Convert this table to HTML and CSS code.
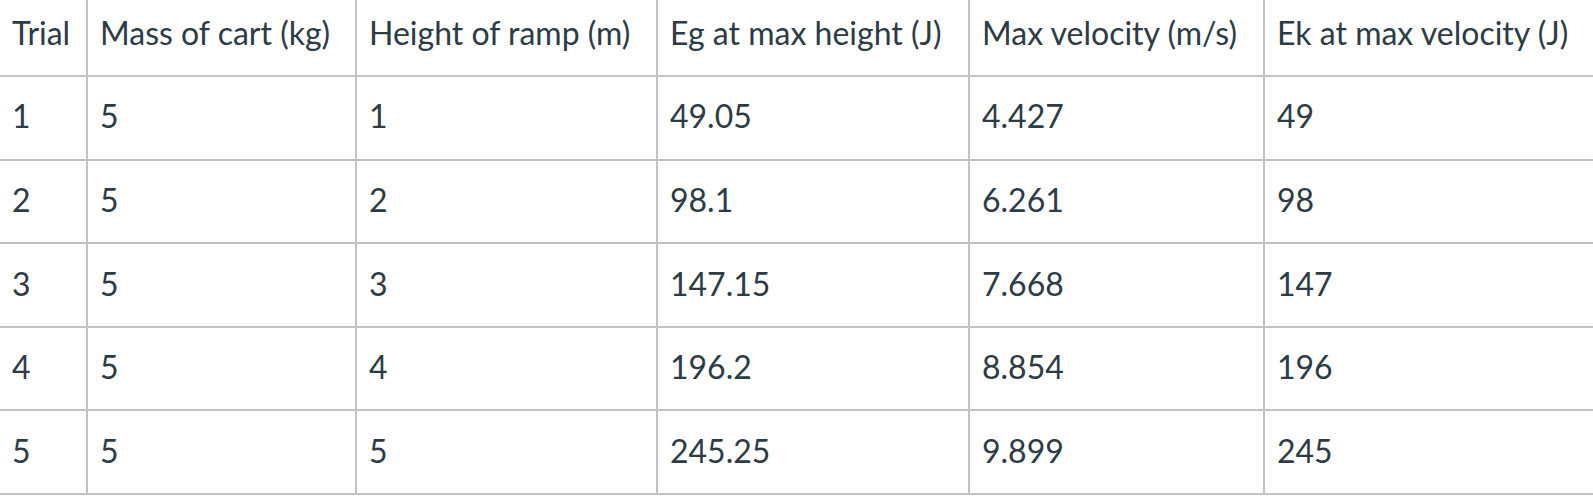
FILE: index.html
```html
<!DOCTYPE html>
<html lang="en">
<head>
<meta charset="utf-8">
<title>Cart on ramp</title>
<link rel="stylesheet" href="styles.css">
</head>
<body>
<table class="data">
  <colgroup>
    <col class="c1"><col class="c2"><col class="c3"><col class="c4"><col class="c5"><col class="c6">
  </colgroup>
  <thead>
    <tr>
      <th>Trial</th>
      <th>Mass of cart (kg)</th>
      <th>Height of ramp (m)</th>
      <th>Eg at max height (J)</th>
      <th>Max velocity (m/s)</th>
      <th>Ek at max velocity (J)</th>
    </tr>
  </thead>
  <tbody>
    <tr><td>1</td><td>5</td><td>1</td><td>49.05</td><td>4.427</td><td>49</td></tr>
    <tr><td>2</td><td>5</td><td>2</td><td>98.1</td><td>6.261</td><td>98</td></tr>
    <tr><td>3</td><td>5</td><td>3</td><td>147.15</td><td>7.668</td><td>147</td></tr>
    <tr><td>4</td><td>5</td><td>4</td><td>196.2</td><td>8.854</td><td>196</td></tr>
    <tr><td>5</td><td>5</td><td>5</td><td>245.25</td><td>9.899</td><td>245</td></tr>
  </tbody>
</table>
</body>
</html>
```

FILE: styles.css
```css
html, body {
  margin: 0;
  padding: 0;
  background: #ffffff;
}

.data {
  width: 1593px;
  table-layout: fixed;
  border-collapse: collapse;
  font-family: "Lato", "Liberation Sans", sans-serif;
  font-size: 32px;
  line-height: 38.4px;
  color: #2d3b45;
}

.c1 { width: 87px; }
.c2 { width: 269px; }
.c3 { width: 301px; }
.c4 { width: 312px; }
.c5 { width: 295px; }
.c6 { width: 329px; }

.data th,
.data td {
  text-align: left;
  font-weight: 400;
  white-space: nowrap;
  border-bottom: 2px solid #c2c2c2;
  border-left: 2px solid #c2c2c2;
}

.data th:first-child,
.data td:first-child {
  border-left: none;
}

.data th {
  padding: 14px 12px 22.6px;
}

.data td {
  padding: 20.4px 12px 22.8px;
}
```
